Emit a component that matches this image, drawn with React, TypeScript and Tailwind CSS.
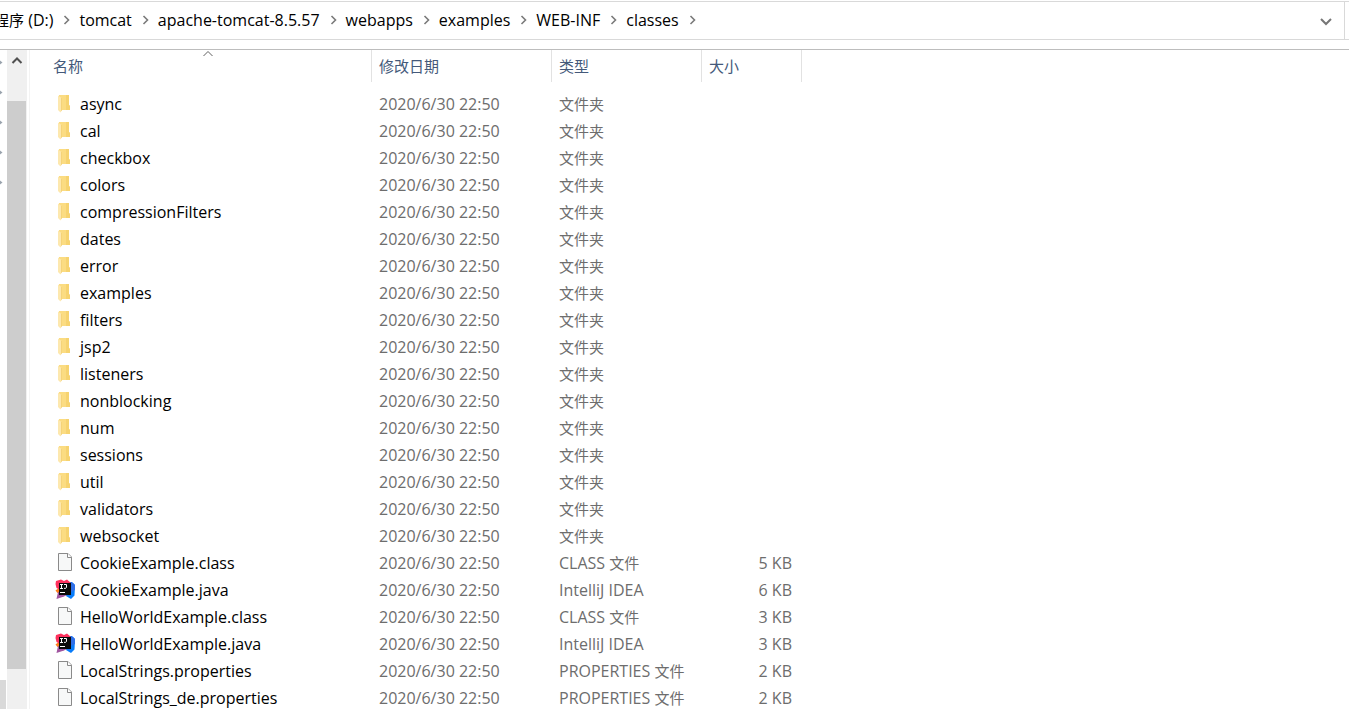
type Kind = "folder" | "file" | "idea";

type Entry = {
  name: string;
  kind: Kind;
  type: string;
  suffix?: string;
  size?: string;
};

const crumbs = ["tomcat", "apache-tomcat-8.5.57", "webapps", "examples", "WEB-INF", "classes"];

const folders = [
  "async",
  "cal",
  "checkbox",
  "colors",
  "compressionFilters",
  "dates",
  "error",
  "examples",
  "filters",
  "jsp2",
  "listeners",
  "nonblocking",
  "num",
  "sessions",
  "util",
  "validators",
  "websocket",
];

const entries: Entry[] = [
  ...folders.map((name): Entry => ({ name, kind: "folder", type: "", suffix: "文件夹" })),
  { name: "CookieExample.class", kind: "file", type: "CLASS ", suffix: "文件", size: "5 KB" },
  { name: "CookieExample.java", kind: "idea", type: "IntelliJ IDEA", size: "6 KB" },
  { name: "HelloWorldExample.class", kind: "file", type: "CLASS ", suffix: "文件", size: "3 KB" },
  { name: "HelloWorldExample.java", kind: "idea", type: "IntelliJ IDEA", size: "3 KB" },
  { name: "LocalStrings.properties", kind: "file", type: "PROPERTIES ", suffix: "文件", size: "2 KB" },
  { name: "LocalStrings_de.properties", kind: "file", type: "PROPERTIES ", suffix: "文件", size: "2 KB" },
];

function CrumbArrow() {
  return (
    <svg className="w-[26px] h-3 shrink-0" viewBox="0 0 26 12" fill="none" aria-hidden="true">
      <path d="M11.5 2 15.5 6l-4 4" stroke="#7a7a7a" strokeWidth="1.6" />
    </svg>
  );
}

function FolderIcon() {
  return (
    <svg className="w-5 h-5" viewBox="0 0 20 20" aria-hidden="true">
      <path d="M4 1h10v10l1 1v4H6l-2-1z" fill="#fbdc82" />
      <path d="M11 1h3v10l1 1v4h-4z" fill="#f6d370" />
      <path d="M3 1.5L6.500 4v13l-1 1.500L3 16z" fill="#fde8ae" />
      <path d="M6.500 4v13" stroke="#f0c965" strokeWidth="0.6" />
    </svg>
  );
}

function FileIcon() {
  return (
    <svg className="w-5 h-5" viewBox="0 0 20 20" fill="none" aria-hidden="true">
      <path d="M3.5.5h9.500l3.500 3.500v13.500h-13z" fill="#f7f8f8" stroke="#8a8a8a" />
      <path d="M12.500.5v4h4" fill="#fff" stroke="#8a8a8a" />
    </svg>
  );
}

function IdeaIcon() {
  return (
    <svg className="mb-0.5 w-5 h-5" viewBox="0 0 20 20" aria-hidden="true">
      <path d="M14 3l3 0 3 3-.5 10.500L16 20l-5-3z" fill="#087cfa" />
      <path d="M.5 11.500L5 8v6H2.500z" fill="#fc801d" />
      <path d="M3 13l9 3-3 1.500L1.500 20z" fill="#a0559f" />
      <path d="M1 2l5-1.500L9 2l3-1.500L16 4l-1 4-10 3-3.500-2L.5 5z" fill="#fe315d" />
      <path d="M16 3.500l2 .5 2 2v5l-4 2z" fill="#2f6fe8" />
      <path d="M4 4h12v12H4z" fill="#0a0a0a" />
      <path
        d="M5 5.500h3M6.500 5.500v4M5 9.500h3M9 5.500h2.500v3q0 1-2.500.9"
        fill="none"
        stroke="#fff"
      />
      <path d="M5 13h5v1H5z" fill="#fff" />
    </svg>
  );
}

function EntryIcon({ kind }: { kind: Kind }) {
  if (kind === "folder") return <FolderIcon />;
  if (kind === "idea") return <IdeaIcon />;
  return <FileIcon />;
}

function AddressBar() {
  return (
    <nav aria-label="路径" className="mt-px flex h-[39px] items-center border-y border-[#d9d9d9]">
      <div className="-ml-1.5 flex flex-1 items-center pb-0.5">
        <a href="#drive" className="whitespace-nowrap">
          <span className="text-[15px]">程序</span> (D:)
        </a>
        <CrumbArrow />
        {crumbs.map((crumb) => (
          <div key={crumb} className="flex items-center">
            <a href={"#" + crumb} className="whitespace-nowrap">{crumb}</a>
            <CrumbArrow />
          </div>
        ))}
      </div>
      <button type="button" aria-label="展开" className="flex h-full w-9 items-center justify-center">
        <svg className="w-3 h-3" viewBox="0 0 12 12" fill="none">
          <path d="M1 4l5 5 5-5" stroke="#767676" strokeWidth="2" />
        </svg>
      </button>
      <div className="h-full w-[5px] border-l border-[#d9d9d9]" />
    </nav>
  );
}

function Sidebar() {
  return (
    <aside className="flex shrink-0 border-r border-[#f3f3f3] pr-0.5">
      <div className="flex w-[7px] flex-col justify-between">
        <div className="flex flex-col">
          {[1, 2, 3, 4, 5].map((pin) => (
            <svg key={pin} className="mt-2 mb-[10px] w-2 h-3" viewBox="0 0 8 12" aria-hidden="true">
              <path d="M0 2.500L2.500 4.500 0 6.500z" fill="#9aa3ad" />
            </svg>
          ))}
        </div>
        <div className="h-[29px] w-[6px] bg-[#d9d9d9]" />
      </div>
      <div className="flex w-5 flex-col bg-[#f0f0f0]">
        <button type="button" aria-label="向上滚动" className="flex h-[51px] w-[19px] shrink-0 justify-center pt-1">
          <svg className="w-3 h-3" viewBox="0 0 12 12" fill="none">
            <path d="M1.5 9L6 4.500 10.500 9" stroke="#505050" strokeWidth="2" />
          </svg>
        </button>
        <div className="mb-10 w-[19px] flex-1 bg-[#cdcdcd]" />
      </div>
    </aside>
  );
}

function HeaderCell({ label, sorted }: { label: string; sorted?: boolean }) {
  return (
    <th className="p-0 pb-2 text-left font-normal">
      <button
        type="button"
        className={
          "relative flex h-8 w-full items-center border-r border-[#e2e2e2] text-[15px] text-[#44597a] " +
          (sorted ? "pl-2" : "pl-[7px]")
        }
      >
        {label}
        {sorted && (
          <svg className="absolute top-0 left-1/2 -ml-[5px] w-[10px] h-2" viewBox="0 0 10 8" fill="none">
            <path d="M.5 6L5 1.500 9.500 6" stroke="#606060" />
          </svg>
        )}
      </button>
    </th>
  );
}

function FileTable() {
  return (
    <table className="ml-[15px] w-[757px] table-fixed border-collapse self-start whitespace-nowrap">
      <colgroup>
        <col className="w-[327px]" />
        <col className="w-[180px]" />
        <col className="w-[150px]" />
        <col className="w-[100px]" />
      </colgroup>
      <thead>
        <tr>
          <HeaderCell label="名称" sorted />
          <HeaderCell label="修改日期" />
          <HeaderCell label="类型" />
          <HeaderCell label="大小" />
        </tr>
      </thead>
      <tbody>
        {entries.map((entry) => (
          <tr key={entry.name} className="h-[27px] text-[#6d6d6d]">
            <td className="p-0 pl-[10px] text-black">
              <div className="flex items-center gap-[5px]">
                <EntryIcon kind={entry.kind} />
                {entry.name}
              </div>
            </td>
            <td className="p-0 pl-[7px]">2020/6/30 22:50</td>
            <td className="p-0 pl-[7px]">
              {entry.type}
              <span className="text-[15px]">{entry.suffix}</span>
            </td>
            <td className="p-0 pr-[10px] text-right">{entry.size}</td>
          </tr>
        ))}
      </tbody>
    </table>
  );
}

export default function App() {
  return (
    <div className="flex h-screen flex-col overflow-hidden bg-white font-['Open_Sans','Noto_Sans_CJK_SC',sans-serif] text-base leading-6 text-black">
      <AddressBar />
      <main className="mt-[9px] flex min-h-0 flex-1 border-t border-[#bdbdbd]">
        <Sidebar />
        <FileTable />
      </main>
    </div>
  );
}
